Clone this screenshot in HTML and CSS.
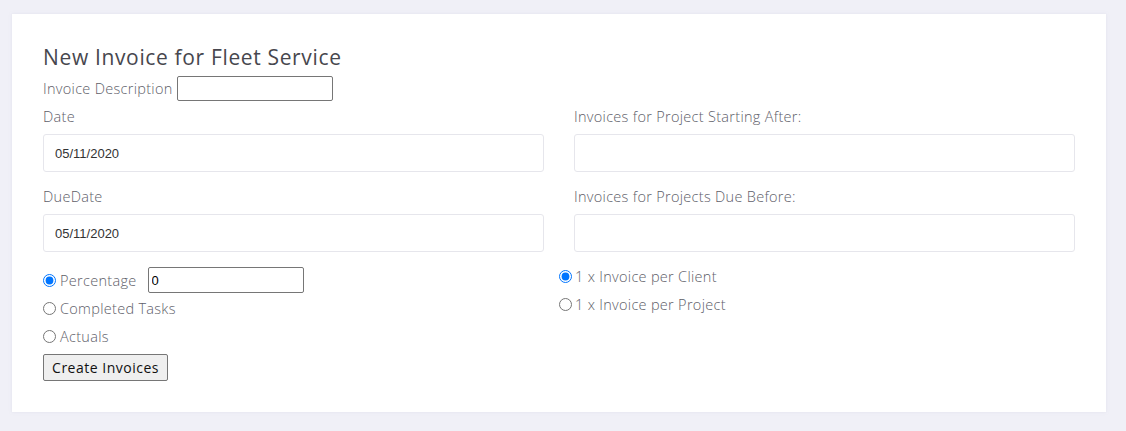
FILE: index.html
```html
<!DOCTYPE html>
<html>
<head>
<meta charset="utf-8">
<link rel="stylesheet" href="styles.css">
</head>
<body>
<div class="card">
  <h2 class="title">New Invoice for Fleet Service</h2>
  <div class="desc-row">
    <label class="lbl" for="desc">Invoice Description</label>
    <input id="desc" class="native-input desc-input" type="text">
  </div>
  <div class="grid">
    <div class="col">
      <div class="group">
        <label class="lbl block">Date</label>
        <input class="field" type="text" value="05/11/2020">
      </div>
      <div class="group">
        <label class="lbl block">DueDate</label>
        <input class="field" type="text" value="05/11/2020">
      </div>
      <div class="radios">
        <div class="radio-row">
          <input type="radio" name="mode" checked>
          <span class="lbl">Percentage</span>
          <input class="native-input pct-input" type="text" value="0">
        </div>
        <div class="radio-row">
          <input type="radio" name="mode">
          <span class="lbl">Completed Tasks</span>
        </div>
        <div class="radio-row">
          <input type="radio" name="mode">
          <span class="lbl">Actuals</span>
        </div>
      </div>
      <button class="btn" type="button">Create Invoices</button>
    </div>
    <div class="col">
      <div class="group">
        <label class="lbl block">Invoices for Project Starting After:</label>
        <input class="field" type="text">
      </div>
      <div class="group">
        <label class="lbl block">Invoices for Projects Due Before:</label>
        <input class="field" type="text">
      </div>
      <div class="radios right">
        <div class="radio-row">
          <input type="radio" name="per" checked>
          <span class="lbl tight">1 x Invoice per Client</span>
        </div>
        <div class="radio-row">
          <input type="radio" name="per">
          <span class="lbl tight">1 x Invoice per Project</span>
        </div>
      </div>
    </div>
  </div>
</div>
</body>
</html>
```
FILE: styles.css
```css
html, body {
  margin: 0;
  padding: 0;
  background: #f0f0f7;
}
body {
  padding: 14px 20px 20px 12px;
  font-family: "Open Sans", "Liberation Sans", sans-serif;
}
.card {
  background: #ffffff;
  padding: 31px 31px 31px 31px;
  box-shadow: 0 0 3px rgba(200, 200, 220, 0.35);
}
.title {
  margin: 0;
  font-size: 21px;
  line-height: 24px;
  font-weight: 500;
  letter-spacing: 0.65px;
  color: #47474e;
}
.desc-row {
  margin-top: 7px;
  display: flex;
  align-items: center;
  height: 25px;
}
.lbl {
  font-size: 14.5px;
  font-weight: 300;
  color: #5e5e69;
  line-height: 21px;
  letter-spacing: 0.3px;
  white-space: nowrap;
}
.lbl.block {
  display: block;
  margin-bottom: 7px;
}
.native-input {
  box-sizing: border-box;
  border: 1px solid #767676;
  border-radius: 2px;
  font-family: "Liberation Sans", Arial, sans-serif;
  font-size: 13px;
  padding: 1px 3px;
  color: #000;
  background: #fff;
}
.desc-input {
  width: 156px;
  height: 25px;
  margin-left: 4px;
}
.grid {
  display: grid;
  grid-template-columns: 1fr 1fr;
  column-gap: 30px;
  margin-top: 5px;
}
.group {
  margin-bottom: 14px;
}
.field {
  display: block;
  box-sizing: border-box;
  width: 100%;
  height: 38px;
  border: 1px solid #e6e6ec;
  border-radius: 3px;
  padding: 0 11px;
  font-family: "Liberation Sans", Arial, sans-serif;
  font-size: 13px;
  color: #333;
  background: #fff;
}
.radios {
  display: flex;
  flex-direction: column;
}
.radio-row {
  display: flex;
  align-items: center;
  height: 28px;
}
.radio-row input[type="radio"] {
  margin: 0 4px 0 0;
  width: 13px;
  height: 13px;
}
.radios.right {
  margin-left: -15px;
  margin-top: -4px;
}
.radios.right .radio-row input[type="radio"] {
  margin-right: 3px;
}
.pct-input {
  width: 156px;
  height: 26px;
  margin-left: 11px;
}
.btn {
  margin-top: 4px;
  box-sizing: border-box;
  width: 125px;
  height: 27px;
  border: 1px solid #767676;
  border-radius: 2px;
  background: #efefef;
  font-family: "Open Sans", "Liberation Sans", sans-serif;
  font-size: 14px;
  letter-spacing: 0.5px;
  color: #111;
  padding: 0;
}
```
